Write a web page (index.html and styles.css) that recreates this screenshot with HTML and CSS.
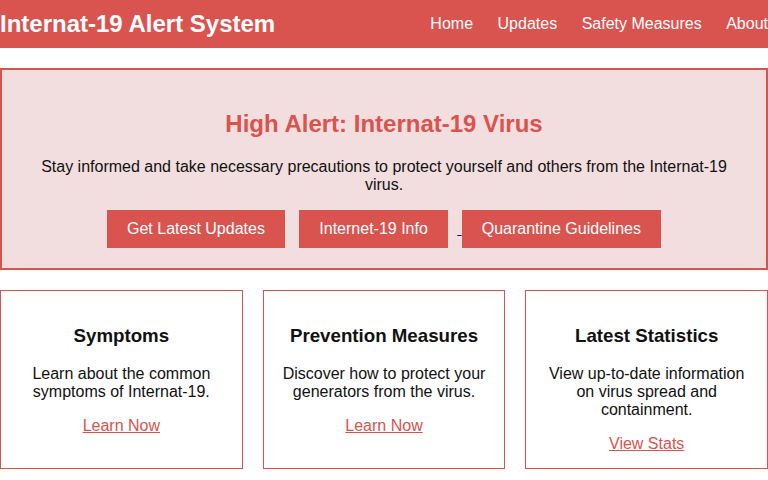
FILE: index.html
```html
<!DOCTYPE html>
<html lang="en">
<head>
    <meta charset="utf-8">
    <meta name="viewport" content="width=device-width, initial-scale=1">
    <title>Internat-19 Alert System</title>
    <link rel="stylesheet" href="styles.css">
</head>
<body>
<header class="site-header">
    <h1 class="logo">Internat-19 Alert System</h1>
    <nav class="nav">
        <a href="#">Home</a>
        <a href="#">Updates</a>
        <a href="#">Safety Measures</a>
        <a href="#">About</a>
    </nav>
</header>

<section class="alert">
    <h2>High Alert: Internat-19 Virus</h2>
    <p>Stay informed and take necessary precautions to protect yourself and others from the Internat-19 virus.</p>
    <div class="actions">
        <button class="btn">Get Latest Updates</button>
        <button class="btn">Internet-19 Info</button>
        <a href="#" class="btn-link">&nbsp;<button class="btn btn-last">Quarantine Guidelines</button></a>
    </div>
</section>

<div class="cards">
    <div class="card">
        <h3>Symptoms</h3>
        <p>Learn about the common symptoms of Internat-19.</p>
        <a href="#">Learn Now</a>
    </div>
    <div class="card">
        <h3>Prevention Measures</h3>
        <p>Discover how to protect your generators from the virus.</p>
        <a href="#">Learn Now</a>
    </div>
    <div class="card">
        <h3>Latest Statistics</h3>
        <p>View up-to-date information on virus spread and containment.</p>
        <a href="#">View Stats</a>
    </div>
</div>
</body>
</html>
```

FILE: styles.css
```css
body {
    margin: 0;
    font-family: "Liberation Sans", Arial, sans-serif;
    color: #111;
    background-color: #fff;
}
.site-header {
    display: flex;
    justify-content: space-between;
    align-items: center;
    padding: 10px 0;
    background-color: #d9534f;
    color: white;
}
.logo {
    margin: 0;
    font-size: 24px;
}
.nav {
    display: flex;
    gap: 24.5px;
}
.nav a {
    color: white;
    text-decoration: none;
    font-size: 16px;
}
.alert {
    margin: 20px 0;
    padding: 20px;
    background-color: #f2dede;
    border: 2px solid #d9534f;
    text-align: center;
}
.alert h2 {
    color: #d9534f;
    font-size: 24px;
}
.alert p {
    font-size: 16px;
}
.btn-link {
    color: #0000ee;
}
.btn {
    margin: 0 5px;
    padding: 10px 20px;
    background-color: #d9534f;
    color: white;
    border: none;
    font-family: inherit;
    font-size: 16px;
    cursor: pointer;
}
.btn-last {
    margin-left: 0;
}
.cards {
    display: flex;
    gap: 20px;
}
.card {
    flex: 1;
    padding: 15px;
    border: 1px solid #d9534f;
    text-align: center;
}
.card h3 {
    font-size: 18.72px;
}
.card a {
    color: #d9534f;
}
```
